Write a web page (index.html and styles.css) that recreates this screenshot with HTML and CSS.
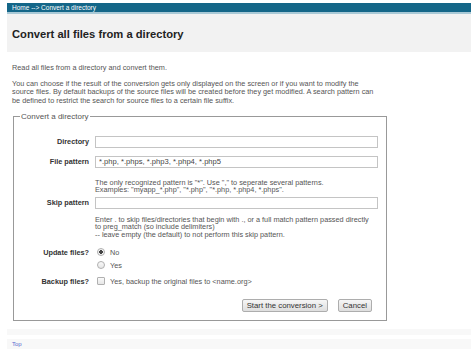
FILE: index.html
```html
<!DOCTYPE html>
<html lang="en">

<head>
    <meta charset="UTF-8">
    <title>Convert a directory</title>
    <link rel="stylesheet" href="styles.css">
</head>

<body>
    <div class="page">
        <div class="crumb"><a href="#">Home</a> --&gt; Convert a directory</div>

        <div class="head">
            <h1>Convert all files from a directory</h1>
        </div>

        <div class="content">
            <p class="intro">Read all files from a directory and convert them.</p>
            <p>You can choose if the result of the conversion gets only displayed on the screen or if you want to modify the
                source files. By default backups of the source files will be created before they get modified. A search pattern can
                be defined to restrict the search for source files to a certain file suffix.</p>

            <fieldset class="box">
                <legend>Convert a directory</legend>
                <div class="form">
                    <label class="lbl">Directory</label>
                    <div class="field"><input type="text" class="txt"></div>

                    <label class="lbl row-file">File pattern</label>
                    <div class="field row-file">
                        <input type="text" class="txt" value="*.php, *.phps, *.php3, *.php4, *.php5">
                        <div class="help">The only recognized pattern is "*". Use "," to seperate several patterns.<br>
                            Examples: "myapp_*.php", "*.php", "*.php, *.php4, *.phps".</div>
                    </div>

                    <label class="lbl row-skip">Skip pattern</label>
                    <div class="field row-skip">
                        <input type="text" class="txt">
                        <div class="help help-skip">Enter . to skip files/directories that begin with ., or a full match pattern passed directly<br>
                            to preg_match (so include delimiters)<br>
                            -- leave empty (the default) to not perform this skip pattern.</div>
                    </div>

                    <label class="lbl lbl-opt row-upd">Update files?</label>
                    <div class="field opts row-upd">
                        <label class="opt"><input type="radio" name="upd" checked> No</label>
                        <label class="opt"><input type="radio" name="upd"> Yes</label>
                    </div>

                    <label class="lbl lbl-opt row-bak">Backup files?</label>
                    <div class="field opts row-bak">
                        <label class="opt"><input type="checkbox"> Yes, backup the original files to &lt;name.org&gt;</label>
                    </div>
                </div>

                <div class="buttons">
                    <button>Start the conversion &gt;</button>
                    <button>Cancel</button>
                </div>
            </fieldset>
        </div>

        <div class="foot"></div>
        <div class="top"><a href="#">Top</a></div>
    </div>
</body>

</html>
```

FILE: styles.css
```css
body {
    margin: 0;
    font-family: "Liberation Sans", Arial, sans-serif;
    font-size: 7.3px;
    color: #555;
    background: #fff;
}

.page {
    margin: 0 3px 0 7px;
    padding-top: 3px;
}

.crumb {
    background: #146688;
    border-bottom: 2px solid #a9c9d6;
    color: #fff;
    font-size: 6.5px;
    padding: 1px 5px;
    height: 7px;
    line-height: 7px;
}

.crumb a {
    color: #fff;
    text-decoration: none;
}

.head {
    background: #f2f2f2;
    height: 38px;
    display: flex;
    align-items: center;
    padding-left: 5px;
}

.head h1 {
    margin: 2px 0 0 0;
    font-size: 11.2px;
    color: #222;
}

.content {
    padding: 12px 5px 0 5px;
}

.content p {
    margin: 0;
    line-height: 8.3px;
    width: 362px;
}

.content p.intro {
    margin-bottom: 7.7px;
}

.box {
    width: 358px;
    margin: 7px 0 0 1px;
    padding: 15px 8px 8px 6px;
    border: 1px solid #999;
}

.box legend {
    font-size: 8px;
    line-height: 9px;
    padding: 0 1px;
    color: #555;
}

.form {
    display: grid;
    grid-template-columns: 69px 1fr;
    column-gap: 6px;
}

.lbl {
    text-align: right;
    font-weight: bold;
    color: #333;
    line-height: 12px;
}

.lbl-opt {
    line-height: 9px;
}

.row-file {
    margin-top: 8px;
}

.row-skip {
    margin-top: 3px;
}

.row-upd {
    margin-top: 9.5px;
}

.row-bak {
    margin-top: 7px;
}

.txt {
    display: block;
    box-sizing: border-box;
    width: 283px;
    height: 12px;
    margin: 0;
    padding: 0 3px;
    border: 1px solid #c4c4c4;
    font-family: inherit;
    font-size: 7.6px;
    color: #444;
    outline: none;
}

.help {
    margin-top: 11px;
    line-height: 7.5px;
}

.help-skip {
    margin-top: 7px;
}

.opts {
    display: flex;
    flex-direction: column;
    gap: 4px;
}

.opt {
    display: flex;
    align-items: center;
    gap: 5px;
    height: 9px;
    line-height: 9px;
    padding-left: 2px;
}

.opt input {
    appearance: none;
    margin: 0;
    width: 8px;
    height: 8px;
    border: 1px solid #b0b0b0;
    background: linear-gradient(#fafafa, #e6e6e6);
    box-sizing: border-box;
}

.opt input[type="radio"] {
    border-radius: 50%;
}

.opt input[type="radio"]:checked {
    background: radial-gradient(circle, #444 0 1.6px, #f4f4f4 2px);
}

.opt input[type="checkbox"] {
    border-radius: 1px;
}

.buttons {
    display: flex;
    justify-content: flex-end;
    gap: 10px;
    margin-top: 13.5px;
    padding-right: 6px;
}

.buttons button {
    font-family: inherit;
    font-size: 7.8px;
    height: 13px;
    padding: 0 4px;
    border: 1px solid #adadad;
    border-radius: 2px;
    background: linear-gradient(#f6f6f6, #dedede);
    color: #333;
}

.foot {
    margin-top: 8px;
    height: 6px;
    background: #f8f8f8;
}

.top {
    height: 10px;
    line-height: 10px;
    padding: 0 5px;
    font-size: 6px;
    background: #f8f8f8;
    margin-top: 4px;
}

.top a {
    color: #5a6ad0;
    text-decoration: none;
}
```
